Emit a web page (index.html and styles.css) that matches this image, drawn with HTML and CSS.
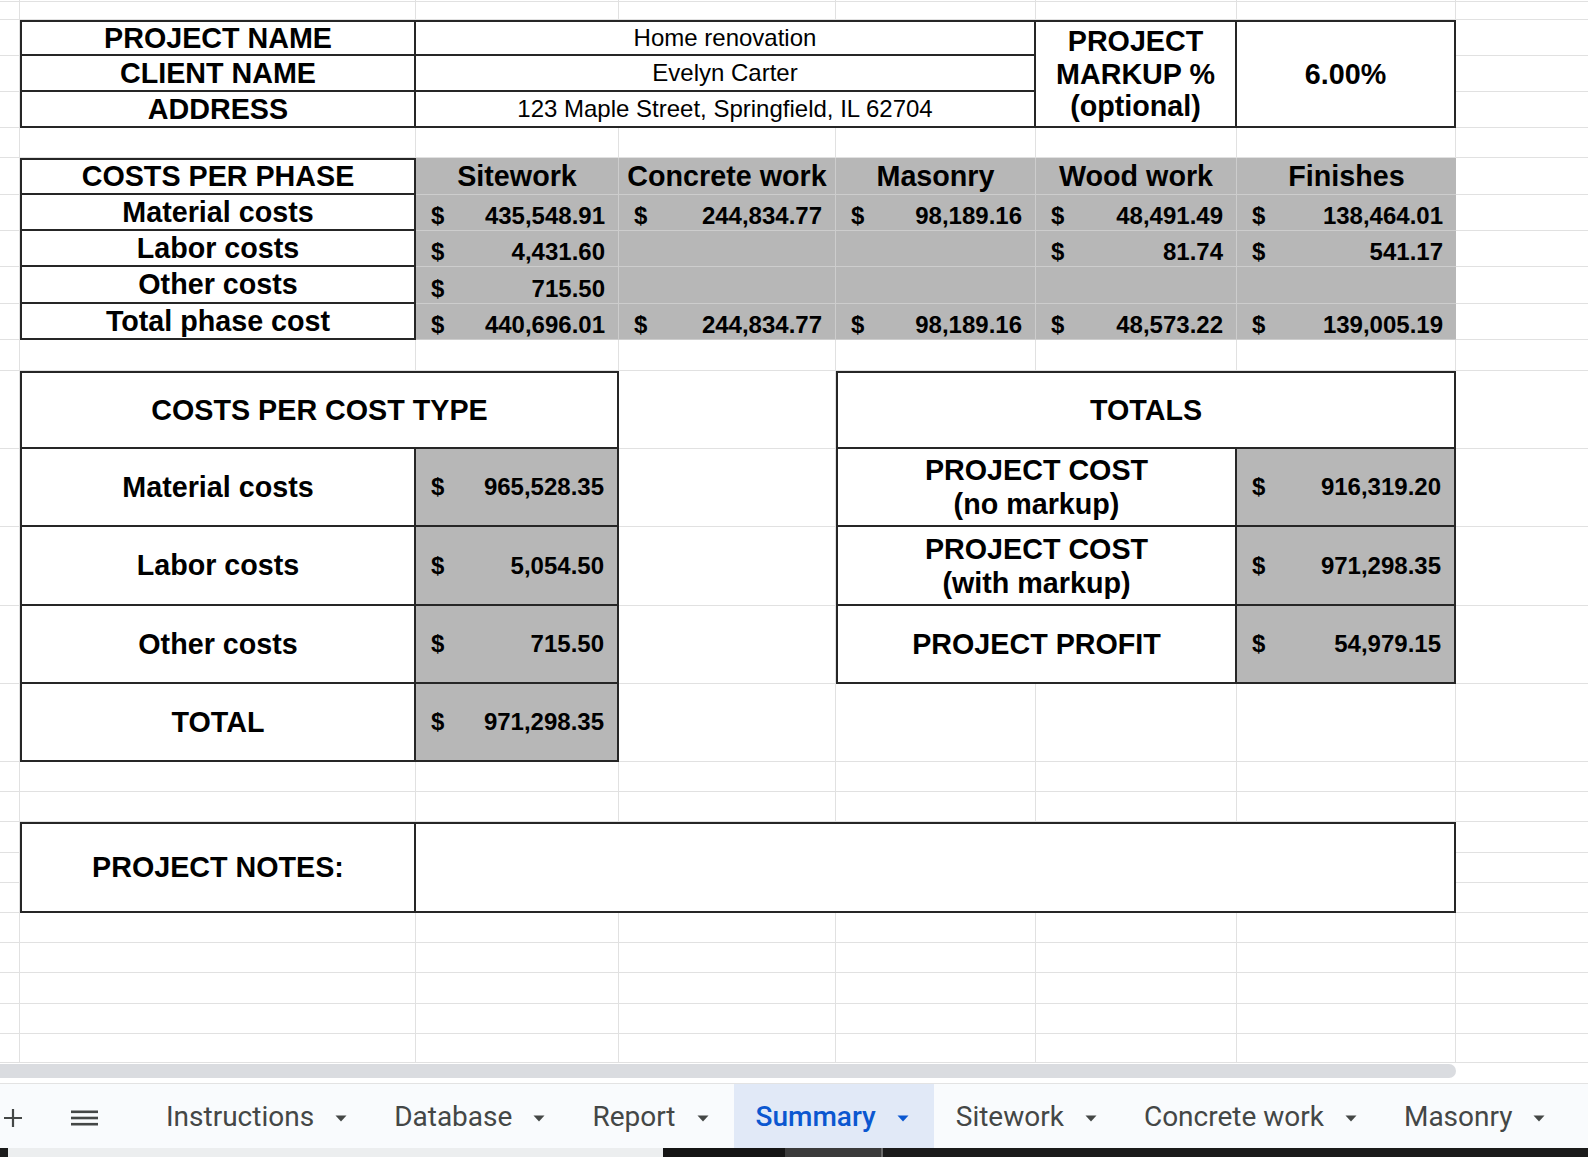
FILE: index.html
```html
<!DOCTYPE html>
<html lang="en">
<head>
<meta charset="utf-8">
<title>Summary</title>
<link rel="stylesheet" href="styles.css">
</head>
<body>
<div class="app">
  <div class="sheet">
    <!-- Project info -->
    <div class="c lbl bl bt r3 cb">PROJECT NAME</div>
    <div class="c val bt r3 cce">Home renovation</div>
    <div class="c lbl multi bt r3s cf">PROJECT<br>MARKUP %<br>(optional)</div>
    <div class="c lbl bt r3s cg">6.00%</div>
    <div class="c lbl bl r4 cb">CLIENT NAME</div>
    <div class="c val r4 cce">Evelyn Carter</div>
    <div class="c lbl bl r5 cb">ADDRESS</div>
    <div class="c val r5 cce">123 Maple Street, Springfield, IL 62704</div>

    <!-- Costs per phase -->
    <div class="c lbl bl bt r7 cb">COSTS PER PHASE</div>
    <div class="g hd r7 cc">Sitework</div>
    <div class="g hd r7 cd">Concrete work</div>
    <div class="g hd r7 ce">Masonry</div>
    <div class="g hd r7 cf">Wood work</div>
    <div class="g hd r7 cg last">Finishes</div>

    <div class="c lbl bl r8 cb">Material costs</div>
    <div class="g m low r8 cc"><span>$</span><span>435,548.91</span></div>
    <div class="g m low r8 cd"><span>$</span><span>244,834.77</span></div>
    <div class="g m low r8 ce"><span>$</span><span>98,189.16</span></div>
    <div class="g m low r8 cf"><span>$</span><span>48,491.49</span></div>
    <div class="g m low r8 cg last"><span>$</span><span>138,464.01</span></div>

    <div class="c lbl bl r9 cb">Labor costs</div>
    <div class="g m low r9 cc"><span>$</span><span>4,431.60</span></div>
    <div class="g m low r9 cd"></div>
    <div class="g m low r9 ce"></div>
    <div class="g m low r9 cf"><span>$</span><span>81.74</span></div>
    <div class="g m low r9 cg last"><span>$</span><span>541.17</span></div>

    <div class="c lbl bl r10 cb">Other costs</div>
    <div class="g m low r10 cc"><span>$</span><span>715.50</span></div>
    <div class="g m low r10 cd"></div>
    <div class="g m low r10 ce"></div>
    <div class="g m low r10 cf"></div>
    <div class="g m low r10 cg last"></div>

    <div class="c lbl bl r11 cb">Total phase cost</div>
    <div class="g m low r11 cc"><span>$</span><span>440,696.01</span></div>
    <div class="g m low r11 cd"><span>$</span><span>244,834.77</span></div>
    <div class="g m low r11 ce"><span>$</span><span>98,189.16</span></div>
    <div class="g m low r11 cf"><span>$</span><span>48,573.22</span></div>
    <div class="g m low r11 cg last"><span>$</span><span>139,005.19</span></div>

    <!-- Costs per cost type -->
    <div class="c lbl bl bt r13 cbc">COSTS PER COST TYPE</div>
    <div class="c lbl bl r14 cb">Material costs</div>
    <div class="c gb m r14 cc"><span>$</span><span>965,528.35</span></div>
    <div class="c lbl bl r15 cb">Labor costs</div>
    <div class="c gb m r15 cc"><span>$</span><span>5,054.50</span></div>
    <div class="c lbl bl r16 cb">Other costs</div>
    <div class="c gb m r16 cc"><span>$</span><span>715.50</span></div>
    <div class="c lbl bl r17 cb">TOTAL</div>
    <div class="c gb m r17 cc"><span>$</span><span>971,298.35</span></div>

    <!-- Totals -->
    <div class="c lbl bl bt r13 ceg">TOTALS</div>
    <div class="c lbl multi2 bl r14 cef">PROJECT COST<br>(no markup)</div>
    <div class="c gb m r14 cg"><span>$</span><span>916,319.20</span></div>
    <div class="c lbl multi2 bl r15 cef">PROJECT COST<br>(with markup)</div>
    <div class="c gb m r15 cg"><span>$</span><span>971,298.35</span></div>
    <div class="c lbl bl r16 cef">PROJECT PROFIT</div>
    <div class="c gb m r16 cg"><span>$</span><span>54,979.15</span></div>

    <!-- Notes -->
    <div class="c lbl bl bt rn cb">PROJECT NOTES:</div>
    <div class="c bt rn ccg"></div>
  </div>

  <div class="hscroll"><div class="thumb"></div></div>

  <div class="tabbar">
    <div class="tool plus">
      <svg width="20" height="20" viewBox="0 0 20 20"><path d="M10 1v18M1 10h18" stroke="#444746" stroke-width="2.2" fill="none"/></svg>
    </div>
    <div class="tool ham">
      <svg width="27" height="16" viewBox="0 0 27 16"><rect x="0" y="0.5" width="27" height="2.6" fill="#444746"/><rect x="0" y="6.7" width="27" height="2.6" fill="#444746"/><rect x="0" y="12.9" width="27" height="2.6" fill="#444746"/></svg>
    </div>
    <div class="tab"><span>Instructions</span><svg class="arr" width="12" height="7" viewBox="0 0 12 7"><path d="M0.5 0.5h11L6 6.5z" fill="#444746"/></svg></div>
    <div class="tab"><span>Database</span><svg class="arr" width="12" height="7" viewBox="0 0 12 7"><path d="M0.5 0.5h11L6 6.5z" fill="#444746"/></svg></div>
    <div class="tab"><span>Report</span><svg class="arr" width="12" height="7" viewBox="0 0 12 7"><path d="M0.5 0.5h11L6 6.5z" fill="#444746"/></svg></div>
    <div class="tab active"><span>Summary</span><svg class="arr" width="12" height="7" viewBox="0 0 12 7"><path d="M0.5 0.5h11L6 6.5z" fill="#0b57d0"/></svg></div>
    <div class="tab"><span>Sitework</span><svg class="arr" width="12" height="7" viewBox="0 0 12 7"><path d="M0.5 0.5h11L6 6.5z" fill="#444746"/></svg></div>
    <div class="tab"><span>Concrete work</span><svg class="arr" width="12" height="7" viewBox="0 0 12 7"><path d="M0.5 0.5h11L6 6.5z" fill="#444746"/></svg></div>
    <div class="tab"><span>Masonry</span><svg class="arr" width="12" height="7" viewBox="0 0 12 7"><path d="M0.5 0.5h11L6 6.5z" fill="#444746"/></svg></div>
  </div>

  <div class="strip">
    <div class="s1"></div>
    <div class="s2"></div>
    <div class="s3"></div>
    <div class="s4"></div>
    <div class="s5"></div>
  </div>
</div>
</body>
</html>
```

FILE: styles.css
```css
* { box-sizing: border-box; }
html, body { margin: 0; padding: 0; background: #fff; }
body { width: 1588px; height: 1157px; overflow: hidden; font-family: "Liberation Sans", Arial, sans-serif; color: #000; }

.app { display: flex; flex-direction: column; height: 1157px; }

/* ---------- spreadsheet grid ---------- */
.sheet {
  --gl: linear-gradient(#e1e1e1, #e1e1e1);
  display: grid;
  grid-template-columns: 20px 396px 203px 217px 200px 201px 219px 1fr;
  grid-template-rows: 2px 18px 36px 36px 36px 30px 37px 36px 36px 37px 36px 31px 78px 78px 79px 78px 78px 30px 30px 31px 30px 30px 30px 30px 31px 30px 29px;
  height: 1063px;
  flex: none;
  background-color: #fff;
  background-repeat: no-repeat;
  background-image:
    var(--gl), var(--gl), var(--gl), var(--gl), var(--gl), var(--gl), var(--gl), var(--gl), var(--gl),
    var(--gl), var(--gl), var(--gl), var(--gl), var(--gl), var(--gl), var(--gl), var(--gl), var(--gl),
    var(--gl), var(--gl), var(--gl), var(--gl), var(--gl), var(--gl), var(--gl), var(--gl), var(--gl),
    var(--gl), var(--gl), var(--gl), var(--gl), var(--gl), var(--gl), var(--gl);
  background-size:
    100% 1px, 100% 1px, 100% 1px, 100% 1px, 100% 1px, 100% 1px, 100% 1px, 100% 1px, 100% 1px,
    100% 1px, 100% 1px, 100% 1px, 100% 1px, 100% 1px, 100% 1px, 100% 1px, 100% 1px, 100% 1px,
    100% 1px, 100% 1px, 100% 1px, 100% 1px, 100% 1px, 100% 1px, 100% 1px, 100% 1px, 100% 1px,
    1px 100%, 1px 100%, 1px 100%, 1px 100%, 1px 100%, 1px 100%, 1px 100%;
  background-position:
    0 1px, 0 19px, 0 55px, 0 91px, 0 127px, 0 157px, 0 194px, 0 230px, 0 266px,
    0 303px, 0 339px, 0 370px, 0 448px, 0 526px, 0 605px, 0 683px, 0 761px, 0 791px,
    0 821px, 0 852px, 0 882px, 0 912px, 0 942px, 0 972px, 0 1003px, 0 1033px, 0 1062px,
    19px 0, 415px 0, 618px 0, 835px 0, 1035px 0, 1236px 0, 1455px 0;
}

/* placement: rows */
.r3 { grid-row: 3; }
.r4 { grid-row: 4; }
.r5 { grid-row: 5; }
.r3s { grid-row: 3 / 6; }
.r7 { grid-row: 7; }
.r8 { grid-row: 8; }
.r9 { grid-row: 9; }
.r10 { grid-row: 10; }
.r11 { grid-row: 11; }
.r13 { grid-row: 13; }
.r14 { grid-row: 14; }
.r15 { grid-row: 15; }
.r16 { grid-row: 16; }
.r17 { grid-row: 17; }
.rn { grid-row: 20 / 23; }

/* placement: columns */
.cb { grid-column: 2; }
.cc { grid-column: 3; }
.cd { grid-column: 4; }
.ce { grid-column: 5; }
.cf { grid-column: 6; }
.cg { grid-column: 7; }
.cce { grid-column: 3 / 6; }
.cbc { grid-column: 2 / 4; }
.ceg { grid-column: 5 / 8; }
.cef { grid-column: 5 / 7; }
.ccg { grid-column: 3 / 8; }

/* bordered cells */
.c {
  display: flex;
  align-items: center;
  justify-content: center;
  text-align: center;
  background: #fff;
  border-right: 2px solid #262626;
  border-bottom: 2px solid #262626;
  white-space: nowrap;
}
.bt { border-top: 2px solid #262626; }
.bl { border-left: 2px solid #262626; }

.lbl { font-size: 28.7px; font-weight: 700; line-height: 1.15; }
.multi { line-height: 32.5px; }
.multi2 { line-height: 34px; }
.val { font-size: 24px; font-weight: 400; }

/* gray filled cells */
.g {
  background: #b7b7b7;
  border-right: 1px solid #cdcdcd;
  border-bottom: 1px solid #cdcdcd;
  display: flex;
  align-items: center;
  justify-content: center;
  white-space: nowrap;
}
.g.last { border-right: 0; }
.gb { background: #b7b7b7; }
.hd { font-size: 28.7px; font-weight: 700; }

.m {
  justify-content: space-between;
  padding: 0 13px 0 15px;
  font-size: 24px;
  font-weight: 700;
}
.m.low { align-items: flex-end; padding-bottom: 0; line-height: 1.15; }

/* ---------- horizontal scrollbar ---------- */
.hscroll {
  height: 21px;
  flex: none;
  background: #fff;
  border-bottom: 1px solid #e3e3e3;
}
.thumb {
  width: 1456px;
  height: 14px;
  margin-top: 1px;
  background: #dadce0;
  border-radius: 0 7px 7px 0;
}

/* ---------- sheet tabs ---------- */
.tabbar {
  height: 64px;
  flex: none;
  display: flex;
  align-items: stretch;
  background: #f9fbfd;
  font-family: Roboto, "Noto Sans", sans-serif;
  font-size: 28px;
  color: #444746;
}
.tool { display: flex; align-items: center; justify-content: center; padding-top: 4px; }
.plus { width: 25px; }
.ham { width: 27px; margin-left: 46px; margin-right: 46px; }
.tab {
  display: flex;
  align-items: center;
  gap: 21px;
  padding: 4px 25px 0 22px;
  white-space: nowrap;
}
.tab span { line-height: 1; padding-bottom: 2px; }
.tab .arr { flex: none; }
.tab.active { background: #e1e9f7; color: #0b57d0; font-weight: 500; }

/* ---------- bottom strip ---------- */
.strip { height: 9px; flex: none; display: flex; background: #1b1b1b; }
.s1 { width: 8px; background: #1b1b1b; }
.s2 { width: 655px; background: #eceeef; }
.s3 { width: 122px; background: #151515; }
.s4 { width: 96px; background: #3b3b3b; }
.s5 { width: 2px; background: #6a6a6a; }
```
